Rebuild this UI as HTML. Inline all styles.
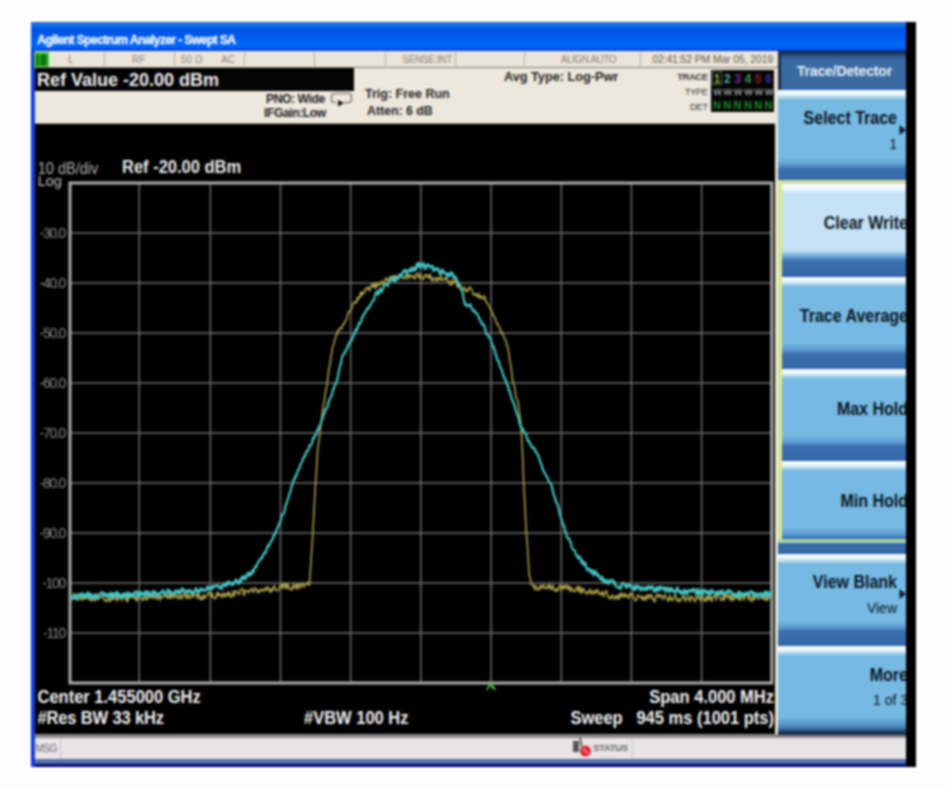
<!DOCTYPE html>
<html><head><meta charset="utf-8">
<style>
*{margin:0;padding:0;box-sizing:border-box}
html,body{width:950px;height:788px;background:#fdfdfd;overflow:hidden;font-family:"Liberation Sans",sans-serif;position:relative}
#w{position:absolute;left:0;top:0;width:950px;height:788px;filter:blur(1px)}
.a{position:absolute}
.t{position:absolute;white-space:nowrap;line-height:1}
</style></head><body><div id="w">
<div class="a" style="left:31px;top:22px;width:885px;height:745px;background:#000;"></div>
<div class="a" style="left:31px;top:22px;width:875px;height:30px;background:linear-gradient(#2a5cb0 0px,#1a78f4 3px,#0054e6 6px,#0058ea 14px,#0066f8 22px,#0062f4 26px,#0040d0 28.5px,#3a58c0 30px);"></div>
<div class="t" style="top:34.17px;font-size:12.2px;color:#eef4ff;font-weight:bold;left:37px;letter-spacing:-0.65px;-webkit-text-stroke:0.3px #eef4ff">Agilent Spectrum Analyzer - Swept SA</div>
<div class="a" style="left:31px;top:51px;width:4px;height:716px;background:linear-gradient(90deg,#1030c0,#1a48e8);"></div>
<div class="a" style="left:35px;top:51px;width:743px;height:16px;background:#ebe5d9;"></div>
<div class="a" style="left:34px;top:52px;width:15px;height:15.5px;background:#48c048;"></div>
<div class="a" style="left:49px;top:52px;width:2.5px;height:15.5px;background:#d8f4cc;"></div>
<div class="a" style="left:35.5px;top:54px;width:3.5px;height:11.5px;background:#0a7a0a;border-radius:1px"></div>
<div class="a" style="left:40px;top:54px;width:6.5px;height:11.5px;background:#0a7a0a;border-radius:3px"></div>
<div class="a" style="left:104px;top:52px;width:1px;height:14px;background:#b0aaa0;"></div>
<div class="a" style="left:174px;top:52px;width:1px;height:14px;background:#b0aaa0;"></div>
<div class="a" style="left:244px;top:52px;width:1px;height:14px;background:#b0aaa0;"></div>
<div class="a" style="left:314px;top:52px;width:1px;height:14px;background:#b0aaa0;"></div>
<div class="a" style="left:385px;top:52px;width:1px;height:14px;background:#b0aaa0;"></div>
<div class="a" style="left:455px;top:52px;width:1px;height:14px;background:#b0aaa0;"></div>
<div class="a" style="left:524px;top:52px;width:1px;height:14px;background:#b0aaa0;"></div>
<div class="a" style="left:640px;top:52px;width:1px;height:14px;background:#b0aaa0;"></div>
<div class="t" style="top:54.53px;font-size:10px;color:#8a8479;left:68px;">L</div>
<div class="t" style="top:54.53px;font-size:10px;color:#8a8479;left:132px;">RF</div>
<div class="t" style="top:54.53px;font-size:10px;color:#8a8479;left:181px;">50 Ω</div>
<div class="t" style="top:54.53px;font-size:10px;color:#8a8479;left:221px;">AC</div>
<div class="t" style="top:55.03px;font-size:10px;color:#8a8479;left:372px;width:80px;text-align:right;letter-spacing:-0.35px">SENSE:INT</div>
<div class="t" style="top:55.03px;font-size:10px;color:#8a8479;left:536px;width:80px;text-align:right;letter-spacing:-0.45px">ALIGN AUTO</div>
<div class="t" style="top:54.78px;font-size:10.3px;color:#5e5950;left:633px;width:140px;text-align:right;letter-spacing:-0.05px">02:41:52 PM Mar 05, 2019</div>
<div class="a" style="left:35px;top:67px;width:743px;height:56px;background:#ede7dc;"></div>
<div class="a" style="left:35px;top:67px;width:743px;height:1px;background:#7a7670;"></div>
<div class="a" style="left:35px;top:68px;width:319px;height:23px;background:#040404;"></div>
<div class="t" style="top:71.26px;font-size:18px;color:#eeeeee;transform:scaleY(1.07);transform-origin:0 15.24px;font-weight:bold;left:37px;">Ref Value -20.00 dBm</div>
<div class="t" style="top:92.67px;font-size:12.2px;color:#262626;font-weight:bold;left:266px;letter-spacing:-0.45px">PNO: Wide</div>
<div class="t" style="top:107.17px;font-size:12.2px;color:#262626;font-weight:bold;left:264px;letter-spacing:-0.45px">IFGain:Low</div>
<svg class="a" style="left:325px;top:88px" width="35" height="22"><rect x="6.5" y="5.5" width="20" height="9" rx="3" fill="none" stroke="#8c8880" stroke-width="1.6"/><rect x="11" y="13" width="8" height="3" fill="#ede7dc"/><path d="M13,12 L19,15 L13,18.5 Z" fill="#111"/></svg>
<div class="t" style="top:87.92px;font-size:12.5px;color:#262626;font-weight:bold;left:365px;">Trig: Free Run</div>
<div class="t" style="top:105.39px;font-size:12.3px;color:#262626;font-weight:bold;left:367px;">Atten: 6 dB</div>
<div class="t" style="top:70.75px;font-size:12.7px;color:#262626;font-weight:bold;left:504px;">Avg Type: Log-Pwr</div>
<div class="t" style="top:72.46px;font-size:9.5px;color:#3c3c3c;left:667.5px;width:40px;text-align:right;letter-spacing:-0.5px;font-weight:bold">TRACE</div>
<div class="t" style="top:87.46px;font-size:9.5px;color:#3c3c3c;left:667.5px;width:40px;text-align:right;letter-spacing:-0.5px">TYPE</div>
<div class="t" style="top:102.46px;font-size:9.5px;color:#3c3c3c;left:667.5px;width:40px;text-align:right;letter-spacing:-0.5px">DET</div>
<div class="a" style="left:711px;top:70px;width:63px;height:42px;background:#060606;"></div>
<div class="a" style="left:712px;top:71px;width:10px;height:14px;background:transparent;border:1.5px solid #5a7040"></div>
<div class="t" style="top:72.84px;font-size:12px;color:#8ab050;font-weight:bold;left:712.0px;width:10px;text-align:center;">1</div>
<div class="t" style="top:88.38px;font-size:9px;color:#9a9a9a;font-weight:bold;left:712.0px;width:10px;text-align:center;letter-spacing:-1px">W</div>
<div class="t" style="top:99.69px;font-size:11px;color:#1a8a2a;font-weight:bold;left:712.0px;width:10px;text-align:center;">N</div>
<div class="t" style="top:72.84px;font-size:12px;color:#5aa0b0;font-weight:bold;left:722.3px;width:10px;text-align:center;">2</div>
<div class="t" style="top:88.38px;font-size:9px;color:#9a9a9a;font-weight:bold;left:722.3px;width:10px;text-align:center;letter-spacing:-1px">W</div>
<div class="t" style="top:99.69px;font-size:11px;color:#1a8a2a;font-weight:bold;left:722.3px;width:10px;text-align:center;">N</div>
<div class="t" style="top:72.84px;font-size:12px;color:#7a2a8a;font-weight:bold;left:732.6px;width:10px;text-align:center;">3</div>
<div class="t" style="top:88.38px;font-size:9px;color:#9a9a9a;font-weight:bold;left:732.6px;width:10px;text-align:center;letter-spacing:-1px">W</div>
<div class="t" style="top:99.69px;font-size:11px;color:#1a8a2a;font-weight:bold;left:732.6px;width:10px;text-align:center;">N</div>
<div class="t" style="top:72.84px;font-size:12px;color:#3a9a5a;font-weight:bold;left:742.9px;width:10px;text-align:center;">4</div>
<div class="t" style="top:88.38px;font-size:9px;color:#9a9a9a;font-weight:bold;left:742.9px;width:10px;text-align:center;letter-spacing:-1px">W</div>
<div class="t" style="top:99.69px;font-size:11px;color:#1a8a2a;font-weight:bold;left:742.9px;width:10px;text-align:center;">N</div>
<div class="t" style="top:72.84px;font-size:12px;color:#8a2030;font-weight:bold;left:753.2px;width:10px;text-align:center;">5</div>
<div class="t" style="top:88.38px;font-size:9px;color:#9a9a9a;font-weight:bold;left:753.2px;width:10px;text-align:center;letter-spacing:-1px">W</div>
<div class="t" style="top:99.69px;font-size:11px;color:#1a8a2a;font-weight:bold;left:753.2px;width:10px;text-align:center;">N</div>
<div class="t" style="top:72.84px;font-size:12px;color:#3a2a90;font-weight:bold;left:763.5px;width:10px;text-align:center;">6</div>
<div class="t" style="top:88.38px;font-size:9px;color:#9a9a9a;font-weight:bold;left:763.5px;width:10px;text-align:center;letter-spacing:-1px">W</div>
<div class="t" style="top:99.69px;font-size:11px;color:#1a8a2a;font-weight:bold;left:763.5px;width:10px;text-align:center;">N</div>
<div class="a" style="left:35px;top:123px;width:741px;height:611px;background:#000;"></div>
<div class="a" style="left:35px;top:122.5px;width:741px;height:1px;background:#a09c94;"></div>
<div class="a" style="left:775px;top:123px;width:3px;height:612px;background:#e8e4d8;"></div>
<div class="a" style="left:35px;top:734px;width:871px;height:4px;background:#8a8888;"></div>
<div class="a" style="left:35px;top:738px;width:871px;height:22px;background:#e8e4e6;"></div>
<div class="a" style="left:35px;top:759px;width:871px;height:5px;background:#5a6ea8;"></div>
<div class="a" style="left:35px;top:764px;width:871px;height:3.2px;background:#000a78;"></div>
<div class="t" style="top:743.53px;font-size:10px;color:#6c6c6c;left:35.5px;letter-spacing:-0.5px">MSG</div>
<div class="a" style="left:60px;top:738px;width:1px;height:21px;background:#cac6c6;"></div>
<div class="a" style="left:632px;top:738px;width:1px;height:21px;background:#cac6c6;"></div>
<svg class="a" style="left:570px;top:736px" width="24" height="24"><rect x="3" y="5" width="6" height="11" fill="#555"/><path d="M10,2 L13,16" stroke="#444" stroke-width="1.5"/><circle cx="15.5" cy="15" r="5.5" fill="#e02838"/><path d="M13,12.5 L18,17.5" stroke="#fff" stroke-width="1"/></svg>
<div class="t" style="top:743.46px;font-size:9.5px;color:#666;font-weight:bold;left:593px;letter-spacing:-0.3px">STATUS</div>
<svg class="a" style="left:0;top:0" width="950" height="788" viewBox="0 0 950 788">
<g stroke="#6c6c6c" stroke-width="1.5" fill="none">
<line x1="139.2" y1="183" x2="139.2" y2="683"/>
<line x1="70.5" y1="233" x2="771.5" y2="233"/>
<line x1="210.4" y1="183" x2="210.4" y2="683"/>
<line x1="70.5" y1="283" x2="771.5" y2="283"/>
<line x1="280.5" y1="183" x2="280.5" y2="683"/>
<line x1="70.5" y1="333" x2="771.5" y2="333"/>
<line x1="350.7" y1="183" x2="350.7" y2="683"/>
<line x1="70.5" y1="383" x2="771.5" y2="383"/>
<line x1="420.9" y1="183" x2="420.9" y2="683"/>
<line x1="70.5" y1="433" x2="771.5" y2="433"/>
<line x1="491.1" y1="183" x2="491.1" y2="683"/>
<line x1="70.5" y1="483" x2="771.5" y2="483"/>
<line x1="561.3" y1="183" x2="561.3" y2="683"/>
<line x1="70.5" y1="533" x2="771.5" y2="533"/>
<line x1="631.4" y1="183" x2="631.4" y2="683"/>
<line x1="70.5" y1="583" x2="771.5" y2="583"/>
<line x1="701.6" y1="183" x2="701.6" y2="683"/>
<line x1="70.5" y1="633" x2="771.5" y2="633"/>
</g>
<rect x="70" y="183" width="701.8" height="500" stroke="#ababab" stroke-width="3" fill="none"/>
<path d="M486.5,690 L491,683.5 L495.5,690 M488,684 L494,689" stroke="#48a848" stroke-width="1.6" fill="none"/>
<polyline points="70.0,595.7 70.7,597.4 71.4,596.6 72.1,598.0 72.8,598.5 73.5,594.8 74.2,593.5 74.9,598.8 75.6,596.2 76.3,595.4 77.0,600.3 77.7,598.0 78.4,599.9 79.1,597.9 79.8,598.6 80.5,595.4 81.2,597.9 81.9,600.1 82.6,598.3 83.3,599.3 84.0,599.1 84.7,594.9 85.4,598.6 86.1,598.4 86.8,596.4 87.5,594.0 88.2,599.1 88.9,597.7 89.6,599.0 90.3,600.5 91.0,599.7 91.7,600.9 92.4,597.6 93.1,599.6 93.8,597.6 94.5,600.5 95.2,600.8 95.9,595.6 96.6,594.5 97.3,594.8 98.0,600.0 98.7,597.7 99.4,598.4 100.1,596.4 100.8,597.3 101.5,596.7 102.2,596.3 102.9,597.8 103.6,598.1 104.3,600.4 105.0,599.5 105.7,600.9 106.4,600.8 107.1,601.7 107.8,599.7 108.5,595.8 109.2,599.5 109.9,601.2 110.6,601.2 111.3,598.9 112.0,599.3 112.7,596.0 113.4,599.4 114.1,598.5 114.8,596.3 115.5,594.2 116.2,599.1 116.9,601.2 117.6,595.6 118.3,599.1 119.0,597.3 119.7,595.1 120.4,595.5 121.1,598.8 121.8,600.4 122.5,595.1 123.2,597.7 123.9,594.5 124.6,598.2 125.3,596.5 126.0,599.8 126.7,601.4 127.4,598.5 128.1,601.1 128.8,597.1 129.5,594.5 130.2,597.4 130.9,594.3 131.6,594.6 132.3,596.2 133.0,597.9 133.7,595.3 134.4,593.8 135.1,599.1 135.8,596.6 136.5,600.4 137.2,600.9 137.9,597.5 138.6,597.2 139.3,597.6 140.0,598.5 140.7,598.4 141.4,598.1 142.1,598.5 142.8,600.7 143.5,598.4 144.2,597.2 144.9,598.9 145.6,596.1 146.3,595.8 147.0,600.3 147.7,598.3 148.4,598.0 149.1,594.3 149.8,596.1 150.5,597.7 151.2,594.2 151.9,597.4 152.6,598.3 153.3,594.6 154.0,597.5 154.7,597.1 155.4,598.5 156.1,596.6 156.8,598.5 157.5,599.2 158.2,594.4 158.9,593.5 159.6,597.4 160.3,600.4 161.0,596.2 161.7,596.6 162.4,597.6 163.1,595.9 163.8,595.8 164.5,595.4 165.2,595.7 165.9,597.3 166.6,595.6 167.3,595.7 168.0,598.4 168.7,594.0 169.4,596.6 170.1,598.3 170.8,595.9 171.5,594.6 172.2,598.2 172.9,595.3 173.6,594.2 174.3,595.6 175.0,597.7 175.7,594.1 176.4,594.7 177.1,594.9 177.8,598.4 178.5,596.5 179.2,598.9 179.9,594.8 180.6,594.9 181.3,597.0 182.0,599.1 182.7,596.7 183.4,594.5 184.1,593.3 184.8,595.7 185.5,594.0 186.2,597.7 186.9,598.9 187.6,594.7 188.3,594.3 189.0,597.7 189.7,597.5 190.4,598.5 191.1,595.6 191.8,593.4 192.5,593.9 193.2,597.4 193.9,594.7 194.6,594.6 195.3,595.0 196.0,595.1 196.7,595.0 197.4,598.5 198.1,594.1 198.8,592.0 199.5,597.8 200.2,598.8 200.9,599.8 201.6,596.2 202.3,598.8 203.0,599.3 203.7,594.6 204.4,597.0 205.1,598.2 205.8,597.3 206.5,596.1 207.2,594.2 207.9,594.0 208.6,593.2 209.3,591.9 210.0,595.1 210.7,593.8 211.4,597.0 212.1,592.6 212.8,597.3 213.5,597.1 214.2,598.5 214.9,598.7 215.6,598.8 216.3,596.6 217.0,592.2 217.7,596.0 218.4,593.1 219.1,593.2 219.8,595.6 220.5,595.3 221.2,594.4 221.9,597.7 222.6,596.2 223.3,593.9 224.0,592.7 224.7,596.5 225.4,594.8 226.1,596.4 226.8,593.8 227.5,592.0 228.2,593.8 228.9,596.1 229.6,592.3 230.3,595.5 231.0,597.1 231.7,596.6 232.4,596.6 233.1,591.0 233.8,593.7 234.5,596.0 235.2,590.9 235.9,591.1 236.6,591.1 237.3,592.8 238.0,592.5 238.7,592.7 239.4,594.7 240.1,589.9 240.8,589.0 241.5,589.2 242.2,589.2 242.9,588.8 243.6,594.8 244.3,595.4 245.0,590.3 245.7,591.7 246.4,590.8 247.1,590.5 247.8,590.6 248.5,592.6 249.2,592.6 249.9,591.0 250.6,589.3 251.3,589.8 252.0,588.4 252.7,591.0 253.4,592.6 254.1,590.7 254.8,588.1 255.5,588.0 256.2,589.2 256.9,591.0 257.6,592.6 258.3,590.2 259.0,592.4 259.7,591.7 260.4,590.1 261.1,589.2 261.8,589.8 262.5,591.2 263.2,589.6 263.9,591.0 264.6,589.7 265.3,587.8 266.0,589.2 266.7,590.6 267.4,586.6 268.1,588.0 268.8,588.2 269.5,591.3 270.2,592.4 270.9,588.8 271.6,591.3 272.3,591.2 273.0,587.5 273.7,587.8 274.4,585.5 275.1,589.6 275.8,589.5 276.5,591.0 277.2,590.6 277.9,589.7 278.6,589.8 279.3,588.6 280.0,585.2 280.7,587.6 281.4,584.1 282.1,584.2 282.8,588.4 283.5,584.5 284.2,583.8 284.9,583.6 285.6,588.8 286.3,585.3 287.0,583.3 287.7,588.3 288.4,584.7 289.1,588.6 289.8,588.4 290.5,589.4 291.2,590.4 291.9,588.0 292.6,588.9 293.3,583.9 294.0,587.6 294.7,586.7 295.4,587.8 296.1,583.9 296.8,587.2 297.5,589.3 298.2,583.8 298.9,584.2 299.6,585.9 300.3,588.0 301.0,584.6 301.7,583.2 302.4,583.3 303.1,585.8 303.8,587.3 304.5,585.2 305.2,584.4 305.9,584.4 306.6,584.0 307.3,584.3 308.0,582.1 308.7,584.3 309.4,585.3 310.1,573.8 310.8,564.9 311.5,552.9 312.2,543.8 312.9,531.7 313.6,518.7 314.3,505.2 315.0,492.0 315.7,481.7 316.4,472.0 317.1,458.3 317.8,447.3 318.5,444.2 319.2,440.0 319.9,433.1 320.6,427.0 321.3,422.4 322.0,414.9 322.7,410.2 323.4,405.3 324.1,402.2 324.8,396.9 325.5,391.8 326.2,389.0 326.9,385.9 327.6,378.9 328.3,374.4 329.0,367.8 329.7,365.7 330.4,361.3 331.1,356.2 331.8,352.0 332.5,347.3 333.2,345.7 333.9,343.3 334.6,340.1 335.3,338.2 336.0,335.8 336.7,335.3 337.4,330.8 338.1,332.2 338.8,329.8 339.5,329.4 340.2,327.7 340.9,329.0 341.6,328.6 342.3,326.0 343.0,324.1 343.7,324.6 344.4,324.0 345.1,320.7 345.8,320.1 346.5,319.8 347.2,316.5 347.9,313.6 348.6,311.7 349.3,312.1 350.0,310.9 350.7,311.0 351.4,309.8 352.1,306.1 352.8,304.2 353.5,303.2 354.2,301.8 354.9,302.7 355.6,302.8 356.3,303.2 357.0,298.1 357.7,300.6 358.4,297.0 359.1,296.4 359.8,297.8 360.5,293.3 361.2,291.8 361.9,295.9 362.6,292.8 363.3,292.0 364.0,292.8 364.7,293.2 365.4,288.3 366.1,288.8 366.8,289.1 367.5,289.1 368.2,286.7 368.9,288.4 369.6,291.0 370.3,287.6 371.0,287.5 371.7,284.3 372.4,284.3 373.1,286.7 373.8,283.2 374.5,287.4 375.2,288.3 375.9,282.7 376.6,286.8 377.3,283.7 378.0,285.3 378.7,285.4 379.4,282.0 380.1,283.5 380.8,283.5 381.5,284.4 382.2,280.7 382.9,282.9 383.6,284.6 384.3,282.8 385.0,281.3 385.7,277.8 386.4,279.3 387.1,278.5 387.8,280.5 388.5,280.6 389.2,279.6 389.9,276.5 390.6,278.7 391.3,279.0 392.0,276.0 392.7,280.0 393.4,279.3 394.1,275.5 394.8,280.0 395.5,275.7 396.2,275.8 396.9,278.4 397.6,278.2 398.3,277.8 399.0,278.3 399.7,277.0 400.4,275.7 401.1,274.5 401.8,273.4 402.5,277.5 403.2,278.8 403.9,277.7 404.6,278.7 405.3,276.4 406.0,275.1 406.7,275.6 407.4,279.0 408.1,274.2 408.8,276.2 409.5,274.9 410.2,278.1 410.9,276.1 411.6,275.4 412.3,275.7 413.0,276.7 413.7,278.5 414.4,276.1 415.1,278.8 415.8,274.5 416.5,274.5 417.2,273.3 417.9,273.1 418.6,277.6 419.3,278.3 420.0,274.8 420.7,274.0 421.4,275.4 422.1,278.0 422.8,279.2 423.5,279.1 424.2,278.0 424.9,274.8 425.6,275.7 426.3,274.6 427.0,276.6 427.7,277.4 428.4,275.2 429.1,275.0 429.8,278.6 430.5,274.4 431.2,278.7 431.9,280.4 432.6,281.2 433.3,277.7 434.0,277.9 434.7,278.3 435.4,278.7 436.1,281.2 436.8,279.9 437.5,277.0 438.2,280.1 438.9,278.4 439.6,278.8 440.3,279.9 441.0,275.4 441.7,279.7 442.4,280.2 443.1,279.4 443.8,279.6 444.5,279.4 445.2,277.7 445.9,279.8 446.6,277.2 447.3,279.8 448.0,281.7 448.7,281.0 449.4,281.8 450.1,284.9 450.8,285.4 451.5,280.5 452.2,284.0 452.9,283.9 453.6,280.2 454.3,281.5 455.0,281.2 455.7,280.2 456.4,283.3 457.1,286.9 457.8,283.9 458.5,287.1 459.2,286.8 459.9,283.3 460.6,287.6 461.3,287.2 462.0,289.5 462.7,289.0 463.4,289.3 464.1,286.9 464.8,289.7 465.5,291.6 466.2,291.8 466.9,289.3 467.6,291.1 468.3,290.0 469.0,287.5 469.7,286.9 470.4,287.4 471.1,288.8 471.8,289.3 472.5,292.1 473.2,294.6 473.9,294.5 474.6,294.0 475.3,295.5 476.0,293.8 476.7,294.6 477.4,296.9 478.1,295.3 478.8,293.5 479.5,298.2 480.2,298.3 480.9,296.1 481.6,296.1 482.3,297.7 483.0,299.1 483.7,297.4 484.4,295.9 485.1,297.5 485.8,301.6 486.5,301.3 487.2,303.6 487.9,304.2 488.6,305.4 489.3,306.7 490.0,309.0 490.7,309.6 491.4,310.3 492.1,311.8 492.8,313.5 493.5,316.3 494.2,316.3 494.9,317.2 495.6,320.2 496.3,321.8 497.0,324.4 497.7,323.5 498.4,325.7 499.1,327.3 499.8,327.2 500.5,332.1 501.2,331.3 501.9,331.6 502.6,334.3 503.3,334.8 504.0,337.8 504.7,339.0 505.4,339.8 506.1,341.2 506.8,345.7 507.5,346.4 508.2,350.1 508.9,353.0 509.6,359.8 510.3,362.8 511.0,367.2 511.7,372.2 512.4,379.5 513.1,383.0 513.8,384.9 514.5,386.7 515.2,391.9 515.9,396.7 516.6,398.7 517.3,399.1 518.0,401.6 518.7,407.1 519.4,412.8 520.1,417.7 520.8,423.1 521.5,434.7 522.2,447.0 522.9,460.2 523.6,482.0 524.3,494.2 525.0,507.8 525.7,521.1 526.4,534.0 527.1,541.1 527.8,551.6 528.5,563.3 529.2,575.4 529.9,576.3 530.6,579.4 531.3,584.7 532.0,585.2 532.7,585.5 533.4,585.2 534.1,587.5 534.8,589.8 535.5,585.3 536.2,588.0 536.9,588.7 537.6,589.6 538.3,587.9 539.0,590.1 539.7,586.8 540.4,586.4 541.1,585.1 541.8,588.5 542.5,587.4 543.2,585.7 543.9,584.6 544.6,588.1 545.3,588.3 546.0,589.0 546.7,587.1 547.4,587.3 548.1,585.1 548.8,588.4 549.5,584.6 550.2,586.7 550.9,589.2 551.6,589.3 552.3,585.4 553.0,585.4 553.7,589.6 554.4,589.3 555.1,590.9 555.8,591.3 556.5,588.5 557.2,590.9 557.9,590.4 558.6,587.6 559.3,587.2 560.0,585.1 560.7,586.9 561.4,591.2 562.1,586.5 562.8,588.5 563.5,585.9 564.2,585.1 564.9,588.8 565.6,587.0 566.3,585.3 567.0,585.6 567.7,589.1 568.4,589.6 569.1,585.9 569.8,586.5 570.5,591.7 571.2,587.9 571.9,589.4 572.6,588.8 573.3,591.2 574.0,590.6 574.7,591.8 575.4,590.5 576.1,587.9 576.8,587.2 577.5,586.5 578.2,591.4 578.9,587.9 579.6,586.5 580.3,592.6 581.0,589.0 581.7,592.9 582.4,588.4 583.1,590.0 583.8,588.8 584.5,592.7 585.2,592.3 585.9,592.4 586.6,593.3 587.3,594.4 588.0,591.2 588.7,592.2 589.4,591.4 590.1,589.0 590.8,593.4 591.5,593.0 592.2,594.4 592.9,590.7 593.6,592.2 594.3,592.1 595.0,593.9 595.7,590.1 596.4,591.0 597.1,592.3 597.8,589.8 598.5,592.6 599.2,594.6 599.9,593.1 600.6,594.3 601.3,594.4 602.0,591.8 602.7,592.2 603.4,596.8 604.1,593.5 604.8,593.4 605.5,591.1 606.2,591.5 606.9,591.3 607.6,596.6 608.3,596.6 609.0,597.7 609.7,598.8 610.4,596.6 611.1,598.3 611.8,596.1 612.5,594.8 613.2,598.1 613.9,598.7 614.6,599.2 615.3,596.2 616.0,597.4 616.7,595.3 617.4,598.8 618.1,599.2 618.8,595.1 619.5,598.4 620.2,594.2 620.9,592.6 621.6,596.5 622.3,594.6 623.0,595.7 623.7,596.8 624.4,593.1 625.1,597.0 625.8,594.8 626.5,595.4 627.2,595.0 627.9,597.6 628.6,598.3 629.3,595.4 630.0,593.5 630.7,594.4 631.4,595.4 632.1,593.4 632.8,593.5 633.5,597.7 634.2,598.4 634.9,600.5 635.6,601.0 636.3,600.5 637.0,597.0 637.7,594.7 638.4,595.2 639.1,596.4 639.8,597.2 640.5,597.5 641.2,596.4 641.9,599.5 642.6,596.5 643.3,597.0 644.0,600.0 644.7,600.3 645.4,596.9 646.1,595.8 646.8,599.4 647.5,594.9 648.2,594.6 648.9,597.3 649.6,598.1 650.3,595.8 651.0,594.4 651.7,595.1 652.4,599.1 653.1,598.0 653.8,601.3 654.5,600.8 655.2,601.9 655.9,595.8 656.6,595.3 657.3,594.0 658.0,596.5 658.7,596.5 659.4,594.6 660.1,597.5 660.8,595.1 661.5,596.0 662.2,595.8 662.9,599.5 663.6,597.8 664.3,596.3 665.0,594.5 665.7,596.6 666.4,598.5 667.1,599.3 667.8,601.1 668.5,600.9 669.2,597.0 669.9,595.3 670.6,599.1 671.3,600.2 672.0,598.6 672.7,600.4 673.4,599.0 674.1,596.7 674.8,595.4 675.5,594.1 676.2,598.0 676.9,600.7 677.6,601.4 678.3,598.6 679.0,599.3 679.7,601.2 680.4,600.9 681.1,599.4 681.8,597.8 682.5,598.1 683.2,595.8 683.9,595.3 684.6,598.6 685.3,601.5 686.0,599.2 686.7,597.7 687.4,596.9 688.1,597.4 688.8,599.9 689.5,598.2 690.2,601.2 690.9,596.4 691.6,596.4 692.3,597.7 693.0,597.3 693.7,600.2 694.4,600.8 695.1,601.6 695.8,599.7 696.5,595.2 697.2,597.8 697.9,598.3 698.6,598.0 699.3,596.5 700.0,599.0 700.7,601.1 701.4,596.0 702.1,598.6 702.8,597.3 703.5,597.9 704.2,600.6 704.9,601.7 705.6,599.8 706.3,596.3 707.0,600.4 707.7,596.3 708.4,596.7 709.1,599.8 709.8,597.1 710.5,596.1 711.2,600.5 711.9,601.5 712.6,597.5 713.3,597.0 714.0,596.1 714.7,594.9 715.4,595.4 716.1,600.4 716.8,595.6 717.5,595.4 718.2,595.1 718.9,594.2 719.6,597.0 720.3,599.2 721.0,600.4 721.7,599.3 722.4,600.2 723.1,595.0 723.8,595.5 724.5,600.3 725.2,595.4 725.9,595.5 726.6,597.0 727.3,595.9 728.0,597.5 728.7,594.5 729.4,595.0 730.1,600.1 730.8,595.8 731.5,599.9 732.2,595.9 732.9,600.5 733.6,599.5 734.3,599.0 735.0,595.5 735.7,594.0 736.4,598.4 737.1,595.5 737.8,594.9 738.5,599.0 739.2,600.4 739.9,595.1 740.6,600.0 741.3,598.3 742.0,596.8 742.7,594.6 743.4,595.9 744.1,600.3 744.8,596.6 745.5,594.7 746.2,594.3 746.9,594.0 747.6,595.5 748.3,599.7 749.0,595.0 749.7,594.6 750.4,599.6 751.1,601.2 751.8,601.5 752.5,596.6 753.2,596.1 753.9,600.0 754.6,597.8 755.3,598.8 756.0,596.3 756.7,593.7 757.4,595.3 758.1,598.4 758.8,599.4 759.5,598.2 760.2,597.2 760.9,597.4 761.6,596.8 762.3,597.3 763.0,599.4 763.7,595.7 764.4,597.4 765.1,600.1 765.8,600.2 766.5,595.7 767.2,599.9 767.9,600.1 768.6,595.5 769.3,595.1 770.0,594.5 770.7,593.3 771.4,599.3" fill="none" stroke="#a89c48" stroke-width="1.6" stroke-linejoin="round"/>
<polyline points="70.0,596.7 70.7,597.5 71.4,598.0 72.1,598.9 72.8,598.0 73.5,598.8 74.2,594.0 74.9,595.2 75.6,598.2 76.3,597.3 77.0,598.5 77.7,594.3 78.4,595.3 79.1,594.3 79.8,595.7 80.5,596.2 81.2,593.1 81.9,593.5 82.6,594.0 83.3,597.6 84.0,597.7 84.7,594.3 85.4,597.0 86.1,594.0 86.8,595.9 87.5,593.6 88.2,592.3 88.9,596.9 89.6,594.3 90.3,593.7 91.0,597.8 91.7,598.2 92.4,595.0 93.1,598.0 93.8,596.4 94.5,596.7 95.2,594.1 95.9,597.6 96.6,597.1 97.3,598.5 98.0,598.4 98.7,595.0 99.4,594.5 100.1,593.3 100.8,592.9 101.5,592.3 102.2,593.5 102.9,595.4 103.6,592.6 104.3,595.6 105.0,594.5 105.7,594.0 106.4,596.7 107.1,595.5 107.8,594.3 108.5,594.9 109.2,596.3 109.9,593.0 110.6,597.3 111.3,593.0 112.0,596.0 112.7,597.3 113.4,593.0 114.1,596.2 114.8,594.6 115.5,595.4 116.2,592.4 116.9,591.9 117.6,592.5 118.3,596.9 119.0,593.8 119.7,596.1 120.4,597.7 121.1,598.1 121.8,594.8 122.5,594.0 123.2,594.8 123.9,596.3 124.6,593.0 125.3,595.7 126.0,596.6 126.7,597.2 127.4,592.7 128.1,596.6 128.8,592.8 129.5,593.2 130.2,594.8 130.9,596.9 131.6,594.1 132.3,596.7 133.0,595.2 133.7,593.5 134.4,593.0 135.1,592.1 135.8,591.3 136.5,591.5 137.2,594.5 137.9,597.0 138.6,592.9 139.3,591.2 140.0,596.0 140.7,594.7 141.4,593.6 142.1,592.3 142.8,594.0 143.5,595.7 144.2,594.0 144.9,593.4 145.6,591.1 146.3,595.4 147.0,591.5 147.7,593.0 148.4,595.3 149.1,591.9 149.8,594.4 150.5,596.2 151.2,594.8 151.9,595.3 152.6,591.6 153.3,592.4 154.0,591.0 154.7,594.5 155.4,592.2 156.1,592.5 156.8,595.6 157.5,595.5 158.2,596.1 158.9,593.3 159.6,592.8 160.3,593.9 161.0,592.8 161.7,591.4 162.4,591.6 163.1,590.2 163.8,591.1 164.5,594.7 165.2,595.4 165.9,593.7 166.6,592.5 167.3,591.2 168.0,589.5 168.7,590.0 169.4,593.0 170.1,594.2 170.8,591.6 171.5,593.3 172.2,593.6 172.9,593.2 173.6,592.8 174.3,593.3 175.0,591.1 175.7,592.4 176.4,590.3 177.1,590.9 177.8,592.6 178.5,592.6 179.2,590.3 179.9,593.3 180.6,592.4 181.3,591.7 182.0,588.3 182.7,590.4 183.4,589.3 184.1,591.3 184.8,590.6 185.5,592.3 186.2,591.8 186.9,592.5 187.6,590.1 188.3,591.1 189.0,591.8 189.7,592.5 190.4,589.9 191.1,592.0 191.8,592.6 192.5,591.8 193.2,593.1 193.9,593.3 194.6,590.8 195.3,590.3 196.0,588.0 196.7,591.2 197.4,592.5 198.1,590.2 198.8,590.8 199.5,591.1 200.2,591.2 200.9,588.0 201.6,590.6 202.3,590.1 203.0,590.4 203.7,589.1 204.4,589.8 205.1,590.8 205.8,590.3 206.5,590.5 207.2,586.7 207.9,586.4 208.6,587.9 209.3,589.4 210.0,587.3 210.7,589.4 211.4,589.5 212.1,586.3 212.8,587.8 213.5,586.8 214.2,585.5 214.9,585.6 215.6,586.6 216.3,586.1 217.0,586.0 217.7,585.0 218.4,587.1 219.1,587.2 219.8,588.4 220.5,588.4 221.2,586.1 221.9,589.1 222.6,584.5 223.3,585.4 224.0,584.7 224.7,585.0 225.4,583.2 226.1,586.5 226.8,584.5 227.5,581.9 228.2,584.2 228.9,581.7 229.6,583.3 230.3,582.3 231.0,583.2 231.7,585.4 232.4,585.0 233.1,582.5 233.8,583.9 234.5,583.2 235.2,581.3 235.9,579.4 236.6,581.3 237.3,581.4 238.0,583.5 238.7,583.9 239.4,581.8 240.1,579.7 240.8,582.0 241.5,577.5 242.2,576.8 242.9,578.7 243.6,579.0 244.3,575.9 245.0,577.5 245.7,578.9 246.4,575.9 247.1,575.0 247.8,573.2 248.5,572.7 249.2,575.9 249.9,572.9 250.6,575.0 251.3,574.8 252.0,572.5 252.7,569.7 253.4,572.5 254.1,569.7 254.8,567.9 255.5,566.3 256.2,567.4 256.9,565.2 257.6,563.1 258.3,562.5 259.0,560.3 259.7,560.7 260.4,559.4 261.1,557.7 261.8,558.2 262.5,557.6 263.2,554.0 263.9,554.0 264.6,552.3 265.3,553.1 266.0,551.8 266.7,548.7 267.4,547.1 268.1,545.3 268.8,546.7 269.5,543.7 270.2,543.0 270.9,541.5 271.6,540.7 272.3,539.3 273.0,538.5 273.7,535.2 274.4,535.6 275.1,533.2 275.8,532.4 276.5,530.2 277.2,528.1 277.9,527.0 278.6,525.2 279.3,523.0 280.0,522.5 280.7,520.4 281.4,516.7 282.1,515.2 282.8,514.1 283.5,514.1 284.2,512.6 284.9,509.3 285.6,504.9 286.3,504.6 287.0,501.7 287.7,499.7 288.4,497.9 289.1,495.5 289.8,492.6 290.5,491.6 291.2,487.9 291.9,485.2 292.6,484.4 293.3,480.9 294.0,479.2 294.7,479.3 295.4,475.5 296.1,476.0 296.8,474.4 297.5,471.9 298.2,469.5 298.9,469.4 299.6,468.5 300.3,464.5 301.0,463.4 301.7,462.4 302.4,460.9 303.1,458.9 303.8,456.7 304.5,456.6 305.2,456.2 305.9,452.6 306.6,451.1 307.3,451.7 308.0,450.7 308.7,448.9 309.4,445.3 310.1,445.7 310.8,445.5 311.5,444.5 312.2,442.2 312.9,438.4 313.6,439.1 314.3,436.1 315.0,435.8 315.7,435.7 316.4,433.9 317.1,430.4 317.8,429.1 318.5,429.8 319.2,426.4 319.9,426.0 320.6,424.2 321.3,421.3 322.0,420.8 322.7,417.3 323.4,415.2 324.1,414.2 324.8,411.4 325.5,409.3 326.2,409.1 326.9,408.2 327.6,407.0 328.3,402.8 329.0,401.3 329.7,399.1 330.4,398.1 331.1,396.0 331.8,395.6 332.5,392.2 333.2,388.8 333.9,388.7 334.6,385.4 335.3,384.8 336.0,382.8 336.7,382.2 337.4,378.8 338.1,375.7 338.8,371.4 339.5,369.0 340.2,365.1 340.9,363.5 341.6,360.0 342.3,356.2 343.0,354.9 343.7,354.0 344.4,354.0 345.1,351.1 345.8,351.2 346.5,350.0 347.2,346.8 347.9,346.9 348.6,344.0 349.3,342.4 350.0,342.5 350.7,340.4 351.4,341.0 352.1,338.8 352.8,336.7 353.5,336.7 354.2,333.2 354.9,333.6 355.6,330.3 356.3,328.7 357.0,329.9 357.7,328.2 358.4,325.1 359.1,322.8 359.8,324.0 360.5,322.2 361.2,321.1 361.9,317.6 362.6,317.5 363.3,315.7 364.0,314.0 364.7,313.0 365.4,312.8 366.1,311.0 366.8,309.8 367.5,307.8 368.2,308.8 368.9,307.5 369.6,306.9 370.3,304.6 371.0,304.5 371.7,302.5 372.4,301.4 373.1,300.4 373.8,300.4 374.5,297.8 375.2,294.8 375.9,292.9 376.6,292.7 377.3,291.1 378.0,294.7 378.7,292.6 379.4,293.2 380.1,288.6 380.8,289.7 381.5,291.8 382.2,290.4 382.9,288.5 383.6,287.8 384.3,285.1 385.0,284.2 385.7,283.6 386.4,284.2 387.1,283.9 387.8,286.3 388.5,282.4 389.2,281.5 389.9,281.1 390.6,279.9 391.3,279.9 392.0,279.2 392.7,280.0 393.4,277.3 394.1,281.2 394.8,278.6 395.5,280.8 396.2,279.5 396.9,278.9 397.6,277.3 398.3,279.3 399.0,274.9 399.7,276.6 400.4,274.6 401.1,276.0 401.8,276.3 402.5,273.0 403.2,272.0 403.9,270.5 404.6,271.0 405.3,270.0 406.0,271.3 406.7,274.5 407.4,271.6 408.1,270.3 408.8,270.6 409.5,269.4 410.2,271.3 410.9,271.4 411.6,268.0 412.3,267.3 413.0,269.3 413.7,271.0 414.4,269.5 415.1,267.6 415.8,269.9 416.5,264.8 417.2,263.5 417.9,267.0 418.6,265.5 419.3,262.8 420.0,264.6 420.7,267.9 421.4,266.2 422.1,265.0 422.8,263.5 423.5,263.1 424.2,267.8 424.9,266.9 425.6,269.3 426.3,265.2 427.0,265.4 427.7,264.5 428.4,266.4 429.1,265.2 429.8,266.1 430.5,267.4 431.2,267.3 431.9,266.0 432.6,265.8 433.3,271.1 434.0,268.2 434.7,269.5 435.4,269.4 436.1,270.2 436.8,268.1 437.5,269.0 438.2,268.3 438.9,270.7 439.6,273.6 440.3,272.7 441.0,274.1 441.7,271.0 442.4,269.3 443.1,272.0 443.8,272.5 444.5,273.3 445.2,272.5 445.9,273.9 446.6,275.0 447.3,276.5 448.0,273.6 448.7,273.9 449.4,276.2 450.1,273.6 450.8,272.5 451.5,273.5 452.2,272.7 452.9,276.5 453.6,277.9 454.3,276.0 455.0,276.5 455.7,277.5 456.4,279.3 457.1,280.2 457.8,282.6 458.5,284.7 459.2,285.1 459.9,285.8 460.6,289.4 461.3,289.3 462.0,291.0 462.7,293.0 463.4,297.2 464.1,300.5 464.8,304.3 465.5,303.5 466.2,305.6 466.9,304.9 467.6,306.4 468.3,305.3 469.0,305.4 469.7,304.3 470.4,304.3 471.1,307.2 471.8,307.8 472.5,310.4 473.2,310.6 473.9,310.8 474.6,310.2 475.3,312.9 476.0,313.1 476.7,313.2 477.4,313.9 478.1,315.4 478.8,317.0 479.5,319.7 480.2,320.0 480.9,320.2 481.6,323.5 482.3,324.6 483.0,324.0 483.7,324.9 484.4,326.5 485.1,328.7 485.8,332.0 486.5,334.2 487.2,334.6 487.9,334.5 488.6,336.2 489.3,337.5 490.0,338.7 490.7,339.0 491.4,342.1 492.1,344.7 492.8,346.4 493.5,346.3 494.2,349.3 494.9,350.3 495.6,353.9 496.3,355.5 497.0,359.0 497.7,361.0 498.4,360.6 499.1,362.5 499.8,366.3 500.5,367.1 501.2,368.5 501.9,370.3 502.6,373.1 503.3,375.8 504.0,376.4 504.7,379.4 505.4,380.2 506.1,380.3 506.8,384.4 507.5,385.6 508.2,386.2 508.9,391.1 509.6,390.7 510.3,394.0 511.0,396.1 511.7,399.5 512.4,400.3 513.1,401.4 513.8,403.5 514.5,405.3 515.2,408.6 515.9,410.3 516.6,413.6 517.3,414.3 518.0,416.4 518.7,418.1 519.4,422.6 520.1,424.8 520.8,426.9 521.5,427.8 522.2,428.3 522.9,428.6 523.6,432.0 524.3,432.8 525.0,432.5 525.7,433.9 526.4,435.1 527.1,438.5 527.8,441.0 528.5,440.1 529.2,442.7 529.9,442.5 530.6,444.5 531.3,446.4 532.0,446.8 532.7,448.3 533.4,448.1 534.1,447.6 534.8,449.9 535.5,451.6 536.2,451.4 536.9,453.4 537.6,454.8 538.3,455.4 539.0,457.8 539.7,459.8 540.4,461.8 541.1,464.3 541.8,465.1 542.5,468.5 543.2,470.0 543.9,471.9 544.6,472.9 545.3,474.1 546.0,475.0 546.7,477.2 547.4,477.4 548.1,479.3 548.8,481.1 549.5,482.1 550.2,482.6 550.9,483.8 551.6,485.7 552.3,488.6 553.0,491.7 553.7,494.6 554.4,496.8 555.1,497.5 555.8,501.4 556.5,501.7 557.2,504.8 557.9,505.0 558.6,508.9 559.3,511.4 560.0,514.7 560.7,517.1 561.4,518.7 562.1,521.3 562.8,523.4 563.5,525.2 564.2,526.0 564.9,529.0 565.6,532.7 566.3,533.1 567.0,537.5 567.7,537.9 568.4,538.6 569.1,538.5 569.8,540.9 570.5,541.8 571.2,544.7 571.9,547.3 572.6,549.1 573.3,549.6 574.0,550.0 574.7,550.2 575.4,553.3 576.1,554.3 576.8,556.1 577.5,555.3 578.2,558.6 578.9,556.3 579.6,556.9 580.3,557.5 581.0,560.3 581.7,563.2 582.4,560.5 583.1,563.1 583.8,565.2 584.5,563.3 585.2,562.6 585.9,565.9 586.6,568.8 587.3,570.2 588.0,570.1 588.7,568.7 589.4,568.9 590.1,569.9 590.8,572.7 591.5,570.4 592.2,570.1 592.9,572.3 593.6,575.3 594.3,572.0 595.0,570.8 595.7,571.4 596.4,574.4 597.1,575.8 597.8,574.2 598.5,574.3 599.2,577.0 599.9,578.3 600.6,579.3 601.3,579.9 602.0,576.6 602.7,578.3 603.4,581.0 604.1,582.5 604.8,579.6 605.5,582.0 606.2,581.7 606.9,583.4 607.6,580.2 608.3,582.2 609.0,583.7 609.7,582.3 610.4,580.1 611.1,580.2 611.8,580.3 612.5,580.2 613.2,580.7 613.9,583.7 614.6,581.8 615.3,585.2 616.0,586.1 616.7,587.0 617.4,587.3 618.1,586.9 618.8,588.0 619.5,588.6 620.2,586.9 620.9,588.5 621.6,584.1 622.3,583.1 623.0,582.7 623.7,583.5 624.4,584.7 625.1,585.5 625.8,587.0 626.5,587.8 627.2,584.4 627.9,585.4 628.6,586.5 629.3,585.9 630.0,584.4 630.7,586.8 631.4,586.2 632.1,587.8 632.8,587.2 633.5,589.8 634.2,590.4 634.9,585.7 635.6,588.5 636.3,589.0 637.0,586.8 637.7,585.4 638.4,587.1 639.1,586.9 639.8,589.1 640.5,590.6 641.2,588.1 641.9,587.0 642.6,587.9 643.3,589.2 644.0,590.1 644.7,589.2 645.4,587.4 646.1,587.3 646.8,590.1 647.5,589.0 648.2,586.2 648.9,587.6 649.6,586.9 650.3,589.2 651.0,586.5 651.7,586.9 652.4,586.1 653.1,588.1 653.8,591.4 654.5,589.8 655.2,588.6 655.9,591.4 656.6,587.4 657.3,587.9 658.0,590.6 658.7,586.8 659.4,590.2 660.1,588.8 660.8,586.5 661.5,587.3 662.2,588.7 662.9,588.7 663.6,589.5 664.3,587.1 665.0,587.5 665.7,591.8 666.4,590.0 667.1,589.7 667.8,587.5 668.5,588.1 669.2,592.0 669.9,591.6 670.6,590.5 671.3,587.7 672.0,588.9 672.7,591.4 673.4,590.2 674.1,590.8 674.8,592.7 675.5,591.8 676.2,591.5 676.9,588.1 677.6,587.3 678.3,591.3 679.0,590.3 679.7,592.7 680.4,593.0 681.1,593.6 681.8,590.8 682.5,593.6 683.2,593.0 683.9,593.7 684.6,589.7 685.3,592.3 686.0,590.9 686.7,593.7 687.4,594.6 688.1,590.5 688.8,590.6 689.5,589.9 690.2,590.8 690.9,590.1 691.6,592.0 692.3,589.5 693.0,589.2 693.7,590.8 694.4,589.0 695.1,590.4 695.8,593.6 696.5,594.4 697.2,590.8 697.9,588.9 698.6,593.0 699.3,594.8 700.0,593.3 700.7,590.3 701.4,590.2 702.1,594.0 702.8,595.0 703.5,590.2 704.2,589.9 704.9,591.2 705.6,590.7 706.3,593.3 707.0,591.8 707.7,593.7 708.4,590.8 709.1,592.1 709.8,595.0 710.5,594.2 711.2,590.6 711.9,589.9 712.6,592.7 713.3,591.9 714.0,591.7 714.7,592.3 715.4,593.0 716.1,595.4 716.8,591.9 717.5,592.9 718.2,591.5 718.9,592.7 719.6,594.1 720.3,591.1 721.0,592.3 721.7,593.9 722.4,590.4 723.1,593.9 723.8,592.8 724.5,593.0 725.2,593.7 725.9,594.9 726.6,591.1 727.3,592.6 728.0,590.5 728.7,591.9 729.4,592.0 730.1,590.3 730.8,591.4 731.5,592.6 732.2,594.0 732.9,595.9 733.6,593.3 734.3,593.6 735.0,594.7 735.7,596.2 736.4,596.7 737.1,597.1 737.8,593.3 738.5,591.7 739.2,595.6 739.9,591.8 740.6,592.9 741.3,594.9 742.0,594.2 742.7,593.3 743.4,596.1 744.1,593.3 744.8,594.0 745.5,595.8 746.2,592.4 746.9,592.7 747.6,593.6 748.3,594.3 749.0,592.5 749.7,593.4 750.4,591.5 751.1,591.2 751.8,592.5 752.5,591.8 753.2,596.2 753.9,593.4 754.6,592.8 755.3,595.5 756.0,596.0 756.7,593.4 757.4,596.0 758.1,595.5 758.8,594.1 759.5,595.1 760.2,593.2 760.9,592.9 761.6,596.3 762.3,594.7 763.0,596.9 763.7,593.4 764.4,592.3 765.1,591.6 765.8,595.3 766.5,595.3 767.2,592.2 767.9,591.6 768.6,595.9 769.3,595.1 770.0,597.1 770.7,592.9 771.4,595.0" fill="none" stroke="#46c4c4" stroke-width="2.2" stroke-linejoin="round"/>
</svg>
<div class="t" style="top:161.73px;font-size:14.5px;color:#acacac;transform:scaleY(1.08);transform-origin:0 12.27px;left:37.8px;">10 dB/div</div>
<div class="t" style="top:173.90px;font-size:14.3px;color:#bcbcbc;left:37.8px;">Log</div>
<div class="t" style="top:159.03px;font-size:16.5px;color:#eaeaea;transform:scaleY(1.07);transform-origin:0 13.97px;font-weight:bold;left:122px;">Ref -20.00 dBm</div>
<div class="t" style="top:225.95px;font-size:14px;color:#8a8a8a;left:25px;width:40px;text-align:right;letter-spacing:-1.3px">-30.0</div>
<div class="t" style="top:275.95px;font-size:14px;color:#8a8a8a;left:25px;width:40px;text-align:right;letter-spacing:-1.3px">-40.0</div>
<div class="t" style="top:325.95px;font-size:14px;color:#8a8a8a;left:25px;width:40px;text-align:right;letter-spacing:-1.3px">-50.0</div>
<div class="t" style="top:375.95px;font-size:14px;color:#8a8a8a;left:25px;width:40px;text-align:right;letter-spacing:-1.3px">-60.0</div>
<div class="t" style="top:425.95px;font-size:14px;color:#8a8a8a;left:25px;width:40px;text-align:right;letter-spacing:-1.3px">-70.0</div>
<div class="t" style="top:475.95px;font-size:14px;color:#8a8a8a;left:25px;width:40px;text-align:right;letter-spacing:-1.3px">-80.0</div>
<div class="t" style="top:525.95px;font-size:14px;color:#8a8a8a;left:25px;width:40px;text-align:right;letter-spacing:-1.3px">-90.0</div>
<div class="t" style="top:575.95px;font-size:14px;color:#8a8a8a;left:25px;width:40px;text-align:right;letter-spacing:-1.3px">-100</div>
<div class="t" style="top:625.95px;font-size:14px;color:#8a8a8a;left:25px;width:40px;text-align:right;letter-spacing:-1.3px">-110</div>
<div class="t" style="top:689.03px;font-size:16.5px;color:#f0f0f0;transform:scaleY(1.1);transform-origin:0 13.97px;font-weight:bold;left:37.5px;">Center 1.455000 GHz</div>
<div class="t" style="top:710.03px;font-size:16.5px;color:#f0f0f0;transform:scaleY(1.1);transform-origin:0 13.97px;font-weight:bold;left:37.5px;letter-spacing:-0.15px">#Res BW 33 kHz</div>
<div class="t" style="top:710.03px;font-size:16.5px;color:#f0f0f0;transform:scaleY(1.1);transform-origin:0 13.97px;font-weight:bold;left:304px;">#VBW 100 Hz</div>
<div class="t" style="top:688.53px;font-size:16.5px;color:#f0f0f0;transform:scaleY(1.1);transform-origin:0 13.97px;font-weight:bold;left:554px;width:220px;text-align:right;">Span 4.000 MHz</div>
<div class="t" style="top:710.03px;font-size:16.5px;color:#f0f0f0;transform:scaleY(1.1);transform-origin:0 13.97px;font-weight:bold;left:534px;width:240px;text-align:right;">Sweep&nbsp;&nbsp;&nbsp;945 ms (1001 pts)</div>
<div class="a" style="left:778px;top:51px;width:128px;height:684px;background:#142a48;"></div>
<div class="a" style="left:778px;top:53px;width:128px;height:37px;background:linear-gradient(#1e3a64 0px,#2c5488 3px,#3a6aa2 7px,#3a6aa2 35px,#4070a8 37px);"></div>
<div class="a" style="left:778px;top:53px;width:3px;height:37px;background:#1a2c48;"></div>
<div class="t" style="top:64.15px;font-size:14px;color:#e6eef6;font-weight:bold;left:780.5px;width:128px;text-align:center;letter-spacing:-0.15px">Trace/Detector</div>
<div class="a" style="left:778px;top:90px;width:128px;height:94px;background:linear-gradient(#f0f9fd 0px,#f0f9fd 4px,#76b9e2 10px,#76b9e2 68px,#5a9ad0 75px,#3a6eac 79px,#3468a8 94px);overflow:hidden">
<div class="t" style="left:0;top:20.96px;width:119px;text-align:right;font-size:16px;color:#0a1624;font-weight:bold;letter-spacing:0px;transform:scaleY(1.13);transform-origin:0 13.54px;">Select Trace</div>
<div class="t" style="left:0;top:46.95px;width:119px;text-align:right;font-size:14px;color:#0a1624;letter-spacing:0px;">1</div>
</div>
<svg class="a" style="left:898px;top:124px" width="9" height="12"><path d="M1.5,1 L8,6 L1.5,11 Z" fill="#0e1c2e"/></svg>
<div class="a" style="left:778px;top:184px;width:128px;height:92.5px;background:linear-gradient(#f0f9fd 0px,#f0f9fd 4px,#c4e2f6 10px,#c4e2f6 66.5px,#5a9ad0 73.5px,#3a6eac 77.5px,#3468a8 92.5px);overflow:hidden">
<div class="t" style="left:0;top:32.06px;width:130px;text-align:right;font-size:16px;color:#0a1624;font-weight:bold;letter-spacing:0px;transform:scaleY(1.13);transform-origin:0 13.54px;">Clear Write</div>
</div>
<div class="a" style="left:778px;top:276.5px;width:128px;height:92.0px;background:linear-gradient(#f0f9fd 0px,#f0f9fd 4px,#76b9e2 10px,#76b9e2 66.0px,#5a9ad0 73.0px,#3a6eac 77.0px,#3468a8 92.0px);overflow:hidden">
<div class="t" style="left:0;top:32.26px;width:130px;text-align:right;font-size:16px;color:#0a1624;font-weight:bold;letter-spacing:0px;transform:scaleY(1.13);transform-origin:0 13.54px;">Trace Average</div>
</div>
<div class="a" style="left:778px;top:368.5px;width:128px;height:92.5px;background:linear-gradient(#f0f9fd 0px,#f0f9fd 4px,#76b9e2 10px,#76b9e2 66.5px,#5a9ad0 73.5px,#3a6eac 77.5px,#3468a8 92.5px);overflow:hidden">
<div class="t" style="left:0;top:33.56px;width:130px;text-align:right;font-size:16px;color:#0a1624;font-weight:bold;letter-spacing:0px;transform:scaleY(1.13);transform-origin:0 13.54px;">Max Hold</div>
</div>
<div class="a" style="left:778px;top:461px;width:128px;height:92.5px;background:linear-gradient(#f0f9fd 0px,#f0f9fd 4px,#76b9e2 10px,#76b9e2 66.5px,#5a9ad0 73.5px,#3a6eac 77.5px,#3468a8 92.5px);overflow:hidden">
<div class="t" style="left:0;top:33.06px;width:130px;text-align:right;font-size:16px;color:#0a1624;font-weight:bold;letter-spacing:0px;transform:scaleY(1.13);transform-origin:0 13.54px;">Min Hold</div>
</div>
<div class="a" style="left:778px;top:553.5px;width:128px;height:92.5px;background:linear-gradient(#f0f9fd 0px,#f0f9fd 4px,#76b9e2 10px,#76b9e2 66.5px,#5a9ad0 73.5px,#3a6eac 77.5px,#3468a8 92.5px);overflow:hidden">
<div class="t" style="left:0;top:21.26px;width:119px;text-align:right;font-size:16px;color:#0a1624;font-weight:bold;letter-spacing:0px;transform:scaleY(1.13);transform-origin:0 13.54px;">View Blank</div>
<div class="t" style="left:0;top:47.95px;width:119px;text-align:right;font-size:14px;color:#0a1624;letter-spacing:0px;">View</div>
</div>
<svg class="a" style="left:898px;top:587.5px" width="9" height="12"><path d="M1.5,1 L8,6 L1.5,11 Z" fill="#0e1c2e"/></svg>
<div class="a" style="left:778px;top:646px;width:128px;height:89px;background:linear-gradient(#f0f9fd 0px,#f0f9fd 4px,#76b9e2 10px,#76b9e2 71px,#4a88c0 81px,#1c3a60 86px,#14243c 89px);overflow:hidden">
<div class="t" style="left:0;top:21.76px;width:130px;text-align:right;font-size:16px;color:#0a1624;font-weight:bold;letter-spacing:0px;transform:scaleY(1.13);transform-origin:0 13.54px;">More</div>
<div class="t" style="left:0;top:47.45px;width:130px;text-align:right;font-size:14px;color:#0a1624;letter-spacing:0px;">1 of 3</div>
</div>
<div class="a" style="left:778px;top:179.5px;width:128px;height:4px;background:#d2dea0;"></div>
<div class="a" style="left:778px;top:180px;width:4px;height:363px;background:#d8e690;"></div>
<div class="a" style="left:778px;top:539px;width:128px;height:4px;background:#a8d4a8;"></div>
</div></body></html>
